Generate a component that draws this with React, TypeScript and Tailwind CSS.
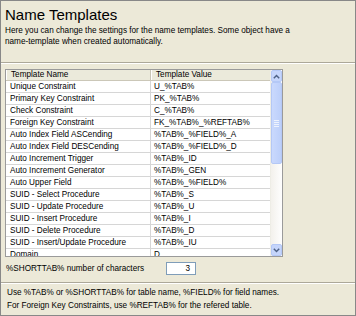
import React from "react";

const rows: [string, string][] = [
  ["Unique Constraint", "U_%TAB%"],
  ["Primary Key Constraint", "PK_%TAB%"],
  ["Check Constraint", "C_%TAB%"],
  ["Foreign Key Constraint", "FK_%TAB%_%REFTAB%"],
  ["Auto Index Field ASCending", "%TAB%_%FIELD%_A"],
  ["Auto Index Field DESCending", "%TAB%_%FIELD%_D"],
  ["Auto Increment Trigger", "%TAB%_ID"],
  ["Auto Increment Generator", "%TAB%_GEN"],
  ["Auto Upper Field", "%TAB%_%FIELD%"],
  ["SUID - Select Procedure", "%TAB%_S"],
  ["SUID - Update Procedure", "%TAB%_U"],
  ["SUID - Insert Procedure", "%TAB%_I"],
  ["SUID - Delete Procedure", "%TAB%_D"],
  ["SUID - Insert/Update Procedure", "%TAB%_IU"],
  ["Domain", "D"],
];

function Arrow({ up }: { up?: boolean }) {
  return (
    <svg width="7" height="5" viewBox="0 0 7 5">
      <path
        d={up ? "M0.8 4.2 L3.5 1.4 L6.2 4.2" : "M0.8 0.8 L3.5 3.6 L6.2 0.8"}
        fill="none"
        stroke="#4d6185"
        strokeWidth="1.4"
      />
    </svg>
  );
}

export default function App() {
  return (
    <div
      className="w-[356px] h-[316px] border border-[#888888] bg-[#ece9d8] flex flex-col overflow-hidden text-[8.2px] leading-[11px] text-black"
      style={{ fontFamily: '"Liberation Sans", Arial, sans-serif' }}
    >
      <div className="px-[4px] pt-[5px] flex flex-col">
        <div className="text-[15px] leading-[18px]">Name Templates</div>
        <div className="mt-[1px]">
          Here you can change the settings for the name templates. Some object have a
          <br />
          name-template when created automatically.
        </div>
      </div>
      <div className="mt-[15px] h-[2px] border-t border-[#aca899] border-b border-b-white" />
      <div className="px-[4px] mt-[5px]">
        <div className="w-[278px] h-[188px] border border-[#9a9a9a] bg-white flex overflow-hidden">
          <div className="flex-1 flex flex-col overflow-hidden">
            <div className="h-[11px] shrink-0 flex bg-[#ebeadb] border-b border-[#cbc7b8] leading-[10px]">
              <div className="w-[145px] pl-[4px] border-r border-[#c8c5b6] border-l border-l-white">
                Template Name
              </div>
              <div className="flex-1 pl-[4px] border-l border-white">Template Value</div>
            </div>
            {rows.map(([n, v]) => (
              <div key={n} className="h-[12px] shrink-0 flex border-b border-[#d6d6d6] leading-[11px]">
                <div className="w-[145px] pl-[4px] border-r border-[#d6d6d6] whitespace-nowrap overflow-hidden">
                  {n}
                </div>
                <div className="flex-1 pl-[3px] whitespace-nowrap overflow-hidden">{v}</div>
              </div>
            ))}
          </div>
          <div className="w-[12px] shrink-0 flex flex-col bg-gradient-to-r from-[#f3f1ec] to-[#fefefe] border-l border-[#eeede6]">
            <div className="h-[12px] shrink-0 rounded-[2px] bg-[#c5d5fb] border border-[#b4c8f6] flex items-center justify-center">
              <Arrow up />
            </div>
            <div className="h-[82px] shrink-0 rounded-[2px] bg-gradient-to-r from-[#cad9fd] to-[#bccffa] border border-[#b4c8f6] flex flex-col items-center justify-center gap-[1px]">
              <div className="w-[5px] h-[1px] bg-[#eef3fe]" />
              <div className="w-[5px] h-[1px] bg-[#eef3fe]" />
              <div className="w-[5px] h-[1px] bg-[#eef3fe]" />
              <div className="w-[5px] h-[1px] bg-[#eef3fe]" />
            </div>
            <div className="flex-1" />
            <div className="h-[12px] shrink-0 rounded-[2px] bg-[#c5d5fb] border border-[#b4c8f6] flex items-center justify-center">
              <Arrow />
            </div>
          </div>
        </div>
      </div>
      <div className="px-[4px] mt-[5px] flex items-center h-[13px]">
        <div className="w-[161px] pl-[1px]">%SHORTTAB% number of characters</div>
        <div className="w-[30px] h-[13px] bg-white border border-[#7f9db9] text-right pr-[5px] leading-[11px]">
          3
        </div>
      </div>
      <div className="mt-[7px] h-[2px] border-t border-[#aca899] border-b border-b-white" />
      <div className="px-[4px] pl-[6px] mt-[3px] flex flex-col gap-[2px]">
        <div>Use %TAB% or %SHORTTAB% for table name, %FIELD% for field names.</div>
        <div>For Foreign Key Constraints, use %REFTAB% for the refered table.</div>
      </div>
    </div>
  );
}
